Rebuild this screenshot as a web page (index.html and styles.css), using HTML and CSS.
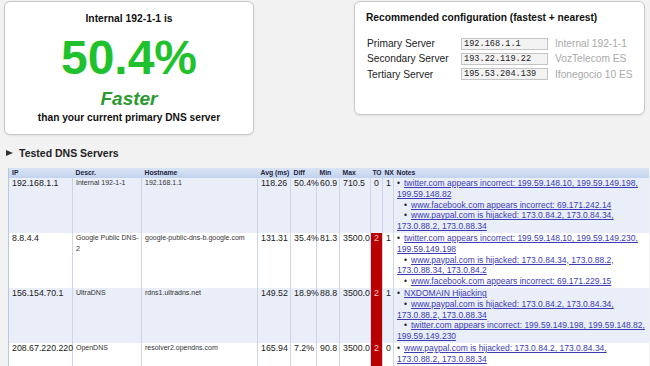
FILE: index.html
```html
<!DOCTYPE html>
<html lang="en">
<head>
  <meta charset="UTF-8" />
  <title>DNS Benchmark Results</title>
  <link rel="stylesheet" href="styles.css">
</head>
<body>

  <!-- SUMMARY CARDS -->
  <div class="top">
    <div class="card summary">
      <p class="lead">Internal 192-1-1 is</p>
      <p class="pct">50.4%</p>
      <p class="faster">Faster</p>
      <p class="sub">than your current primary DNS server</p>
    </div>

    <div class="card config">
      <h2>Recommended configuration (fastest + nearest)</h2>
      <div class="srv-row">
        <span class="srv-label">Primary Server</span>
        <input class="srv-ip" type="text" value="192.168.1.1" readonly />
        <span class="srv-name">Internal 192-1-1</span>
      </div>
      <div class="srv-row">
        <span class="srv-label">Secondary Server</span>
        <input class="srv-ip" type="text" value="193.22.119.22" readonly />
        <span class="srv-name">VozTelecom ES</span>
      </div>
      <div class="srv-row">
        <span class="srv-label">Tertiary Server</span>
        <input class="srv-ip" type="text" value="195.53.204.139" readonly />
        <span class="srv-name">Ifonegocio 10 ES</span>
      </div>
    </div>
  </div>

  <h3 class="section"><span class="arrow"></span>Tested DNS Servers</h3>

  <!-- RESULTS TABLE -->
  <table class="results">
    <colgroup>
      <col style="width:64px">
      <col style="width:69px">
      <col style="width:116px">
      <col style="width:33px">
      <col style="width:26px">
      <col style="width:23px">
      <col style="width:31px">
      <col style="width:12px">
      <col style="width:11px">
      <col style="width:255px">
    </colgroup>
    <thead>
      <tr>
        <th>IP</th>
        <th>Descr.</th>
        <th>Hostname</th>
        <th>Avg (ms)</th>
        <th>Diff</th>
        <th>Min</th>
        <th>Max</th>
        <th class="tight">TO</th>
        <th class="tight">NX</th>
        <th>Notes</th>
      </tr>
    </thead>
    <tbody>
      <tr>
        <td class="ip">192.168.1.1</td>
        <td class="small">Internal 192-1-1</td>
        <td class="small">192.168.1.1</td>
        <td class="num">118.26</td>
        <td class="num">50.4%</td>
        <td class="num">60.9</td>
        <td class="num">710.5</td>
        <td class="num">0</td>
        <td class="num">1</td>
        <td class="notes">
          <ul>
            <li><a href="#">twitter.com appears incorrect: 199.59.148.10, 199.59.149.198, 199.59.148.82</a></li>
            <li><a href="#">www.facebook.com appears incorrect: 69.171.242.14</a></li>
            <li><a href="#">www.paypal.com is hijacked: 173.0.84.2, 173.0.84.34, 173.0.88.2, 173.0.88.34</a></li>
          </ul>
        </td>
      </tr>
      <tr>
        <td class="ip">8.8.4.4</td>
        <td class="small">Google Public DNS-2</td>
        <td class="small">google-public-dns-b.google.com</td>
        <td class="num">131.31</td>
        <td class="num">35.4%</td>
        <td class="num">81.3</td>
        <td class="num">3500.0</td>
        <td class="num timeout">2</td>
        <td class="num">1</td>
        <td class="notes">
          <ul>
            <li><a href="#">twitter.com appears incorrect: 199.59.148.10, 199.59.149.230, 199.59.149.198</a></li>
            <li><a href="#">www.paypal.com is hijacked: 173.0.84.34, 173.0.88.2, 173.0.88.34, 173.0.84.2</a></li>
            <li><a href="#">www.facebook.com appears incorrect: 69.171.229.15</a></li>
          </ul>
        </td>
      </tr>
      <tr>
        <td class="ip">156.154.70.1</td>
        <td class="small">UltraDNS</td>
        <td class="small">rdns1.ultradns.net</td>
        <td class="num">149.52</td>
        <td class="num">18.9%</td>
        <td class="num">88.8</td>
        <td class="num">3500.0</td>
        <td class="num timeout">2</td>
        <td class="num">1</td>
        <td class="notes">
          <ul>
            <li><a href="#">NXDOMAIN Hijacking</a></li>
            <li><a href="#">www.paypal.com is hijacked: 173.0.84.2, 173.0.84.34, 173.0.88.2, 173.0.88.34</a></li>
            <li><a href="#">twitter.com appears incorrect: 199.59.149.198, 199.59.148.82, 199.59.149.230</a></li>
          </ul>
        </td>
      </tr>
      <tr>
        <td class="ip">208.67.220.220</td>
        <td class="small">OpenDNS</td>
        <td class="small">resolver2.opendns.com</td>
        <td class="num">165.94</td>
        <td class="num">7.2%</td>
        <td class="num">90.8</td>
        <td class="num">3500.0</td>
        <td class="num timeout">2</td>
        <td class="num">0</td>
        <td class="notes">
          <ul>
            <li><a href="#">www.paypal.com is hijacked: 173.0.84.2, 173.0.84.34, 173.0.88.2, 173.0.88.34</a></li>
          </ul>
        </td>
      </tr>
    </tbody>
  </table>

</body>
</html>
```

FILE: styles.css
```css
body {
  font-family: 'Liberation Sans', Arial, sans-serif;
  background-color: #f2f2f2;
  margin: 0;
  color: #111;
  height: 366px;
  overflow: hidden;
}

p, h2, h3 {
  margin: 0;
}

/* top cards */
.top {
  display: flex;
  justify-content: space-between;
  align-items: flex-start;
  padding: 1px 5px 0 4px;
}

.card {
  background-color: #ffffff;
  border: 1px solid #c9c9c9;
  border-radius: 6px;
  box-shadow: 0 1px 2px rgba(0, 0, 0, 0.08);
  box-sizing: border-box;
}

.summary {
  width: 250px;
  height: 134px;
  text-align: center;
  padding-top: 10px;
}

.summary .lead {
  font-size: 10.3px;
  font-weight: bold;
  line-height: 14px;
}

.summary .pct {
  font-size: 48px;
  font-weight: bold;
  line-height: 52px;
  margin-top: 6px;
  color: #1fc22c;
}

.summary .faster {
  font-size: 19px;
  font-weight: bold;
  font-style: italic;
  line-height: 20px;
  margin-top: 5px;
  color: #2b9b30;
}

.summary .sub {
  font-size: 10.2px;
  font-weight: bold;
  line-height: 14px;
  margin-top: 2px;
}

.config {
  width: 291px;
  height: 114px;
  padding: 9px 11px 0 11px;
}

.config h2 {
  font-size: 10.2px;
  line-height: 14px;
}

.srv-row {
  display: flex;
  align-items: center;
  height: 15.3px;
  font-size: 10.2px;
}

.config h2 + .srv-row {
  margin-top: 11px;
}

.srv-label {
  width: 94px;
  padding-left: 1px;
  color: #222;
}

.srv-ip {
  width: 87px;
  height: 12px;
  box-sizing: border-box;
  padding: 0 2px;
  border: 1px solid #c4c4c4;
  background-color: #f3f3f3;
  font-family: 'Liberation Mono', 'Courier New', monospace;
  font-size: 8.6px;
  color: #222;
}

.srv-name {
  margin-left: 7px;
  color: #a9a9a9;
}

/* section heading */
.section {
  display: flex;
  align-items: center;
  margin: 11px 0 0 6px;
  font-size: 10.5px;
  line-height: 14px;
  color: #222;
}

.arrow {
  width: 0;
  height: 0;
  border-top: 3.5px solid transparent;
  border-bottom: 3.5px solid transparent;
  border-left: 7px solid #333;
  margin-right: 6px;
}

/* results table */
.results {
  margin: 8px 0 0 8px;
  width: 640px;
  table-layout: fixed;
  border-collapse: collapse;
  background-color: #ffffff;
  border-left: 1px solid #b9c8e2;
}

.results th {
  background: linear-gradient(#d9e4f5, #c3d3ee);
  font-size: 6.8px;
  line-height: 10px;
  text-align: left;
  padding: 0 2px 0 3px;
  color: #1d2540;
  white-space: nowrap;
}

.results th.tight {
  padding: 0 0 0 2px;
  letter-spacing: -0.2px;
}

.results td {
  vertical-align: top;
  padding: 0 2px 1px 3px;
  border-left: 1px solid #cdd6e8;
  font-size: 8.8px;
  line-height: 10.8px;
  color: #1a1a1a;
}

.results tbody tr:nth-child(odd) {
  background-color: #e9eef8;
}

.results td.ip {
  border-left: none;
}

.results td.small {
  font-size: 7px;
  color: #333;
  padding-right: 1px;
}

.results td.num {
  white-space: nowrap;
}

.results td.timeout {
  background-color: #b80000;
  color: #ffc4c4;
}

.notes ul {
  list-style: none;
  margin: 0;
  padding: 0;
}

.notes li {
  font-size: 8.5px;
  line-height: 10.8px;
}

.notes li::before {
  content: "\2022";
  display: inline-block;
  width: 7px;
  text-indent: 0;
  color: #222;
}

.notes li + li {
  text-indent: 7px;
}

.notes a {
  color: #3b3bb5;
  text-decoration: underline;
}
```
